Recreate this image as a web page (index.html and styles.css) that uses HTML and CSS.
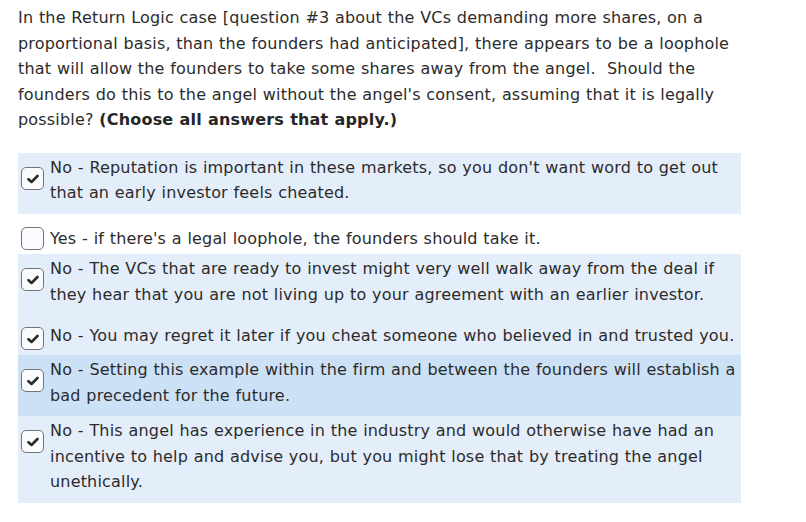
FILE: index.html
```html
<!DOCTYPE html>
<html lang="en">
<head>
<meta charset="utf-8">
<title>Return Logic question</title>
<link rel="stylesheet" href="styles.css">
</head>
<body>
<div class="page">
  <p class="question">In the Return Logic case [question #3 about the VCs demanding more shares, on a proportional basis, than the founders had anticipated], there appears to be a loophole that will allow the founders to take some shares away from the angel.&nbsp; Should the founders do this to the angel without the angel's consent, assuming that it is legally possible? <strong>(Choose all answers that apply.)</strong></p>
  <div class="options">
    <label class="opt selected">
      <span class="box checked"><svg viewBox="0 0 12 10" width="12" height="10"><path d="M1.5 5.2 L4.5 8 L10.5 2" fill="none" stroke="#2b2b2b" stroke-width="2.6" stroke-linecap="round" stroke-linejoin="round"/></svg></span>
      <span class="txt">No - Reputation is important in these markets, so you don't want word to get out that an early investor feels cheated.</span>
    </label>
    <label class="opt plain">
      <span class="box"></span>
      <span class="txt">Yes - if there's a legal loophole, the founders should take it.</span>
    </label>
    <label class="opt selected">
      <span class="box checked"><svg viewBox="0 0 12 10" width="12" height="10"><path d="M1.5 5.2 L4.5 8 L10.5 2" fill="none" stroke="#2b2b2b" stroke-width="2.6" stroke-linecap="round" stroke-linejoin="round"/></svg></span>
      <span class="txt">No - The VCs that are ready to invest might very well walk away from the deal if they hear that you are not living up to your agreement with an earlier investor.</span>
    </label>
    <label class="opt selected single">
      <span class="box checked"><svg viewBox="0 0 12 10" width="12" height="10"><path d="M1.5 5.2 L4.5 8 L10.5 2" fill="none" stroke="#2b2b2b" stroke-width="2.6" stroke-linecap="round" stroke-linejoin="round"/></svg></span>
      <span class="txt">No - You may regret it later if you cheat someone who believed in and trusted you.</span>
    </label>
    <label class="opt selected hover">
      <span class="box checked"><svg viewBox="0 0 12 10" width="12" height="10"><path d="M1.5 5.2 L4.5 8 L10.5 2" fill="none" stroke="#2b2b2b" stroke-width="2.6" stroke-linecap="round" stroke-linejoin="round"/></svg></span>
      <span class="txt">No - Setting this example within the firm and between the founders will establish a bad precedent for the future.</span>
    </label>
    <label class="opt selected">
      <span class="box checked"><svg viewBox="0 0 12 10" width="12" height="10"><path d="M1.5 5.2 L4.5 8 L10.5 2" fill="none" stroke="#2b2b2b" stroke-width="2.6" stroke-linecap="round" stroke-linejoin="round"/></svg></span>
      <span class="txt">No - This angel has experience in the industry and would otherwise have had an incentive to help and advise you, but you might lose that by treating the angel unethically.</span>
    </label>
  </div>
</div>
</body>
</html>
```
FILE: styles.css
```css
html, body {
  margin: 0;
  padding: 0;
  background: #ffffff;
}
body {
  font-family: "DejaVu Sans", Verdana, sans-serif;
  font-size: 16px;
  line-height: 25.5px;
  letter-spacing: 0.18px;
  word-spacing: 0.4px;
  color: #2b2b2b;
}
.page {
  width: 723px;
  padding: 5px 0 0 18px;
}
.question {
  margin: 0 0 20px 0;
}
.question strong {
  font-weight: bold;
  color: #262626;
}
.options {
  display: flex;
  flex-direction: column;
}
.opt {
  display: flex;
  align-items: flex-start;
  gap: 6px;
  padding: 2px 0 8px 3px;
  cursor: pointer;
}
.opt.selected {
  background: #e4eefa;
}
.opt.hover {
  background: #cde1f6;
}
.opt.plain {
  background: transparent;
  padding: 12px 0 3px 3px;
}
.opt.single {
  padding-top: 8px;
  padding-bottom: 5px;
}
.box {
  flex: 0 0 auto;
  box-sizing: border-box;
  width: 23px;
  height: 23px;
  margin-top: 12px;
  border: 1px solid #747474;
  border-radius: 5px;
  background: #fafbfe;
  display: flex;
  align-items: center;
  justify-content: center;
}
.opt.plain .box {
  margin-top: 1px;
}
.opt.single .box {
  margin-top: 4px;
}
.box svg {
  display: block;
  margin-top: 1px;
}
.txt {
  flex: 1 1 auto;
  padding-right: 2px;
}
```
